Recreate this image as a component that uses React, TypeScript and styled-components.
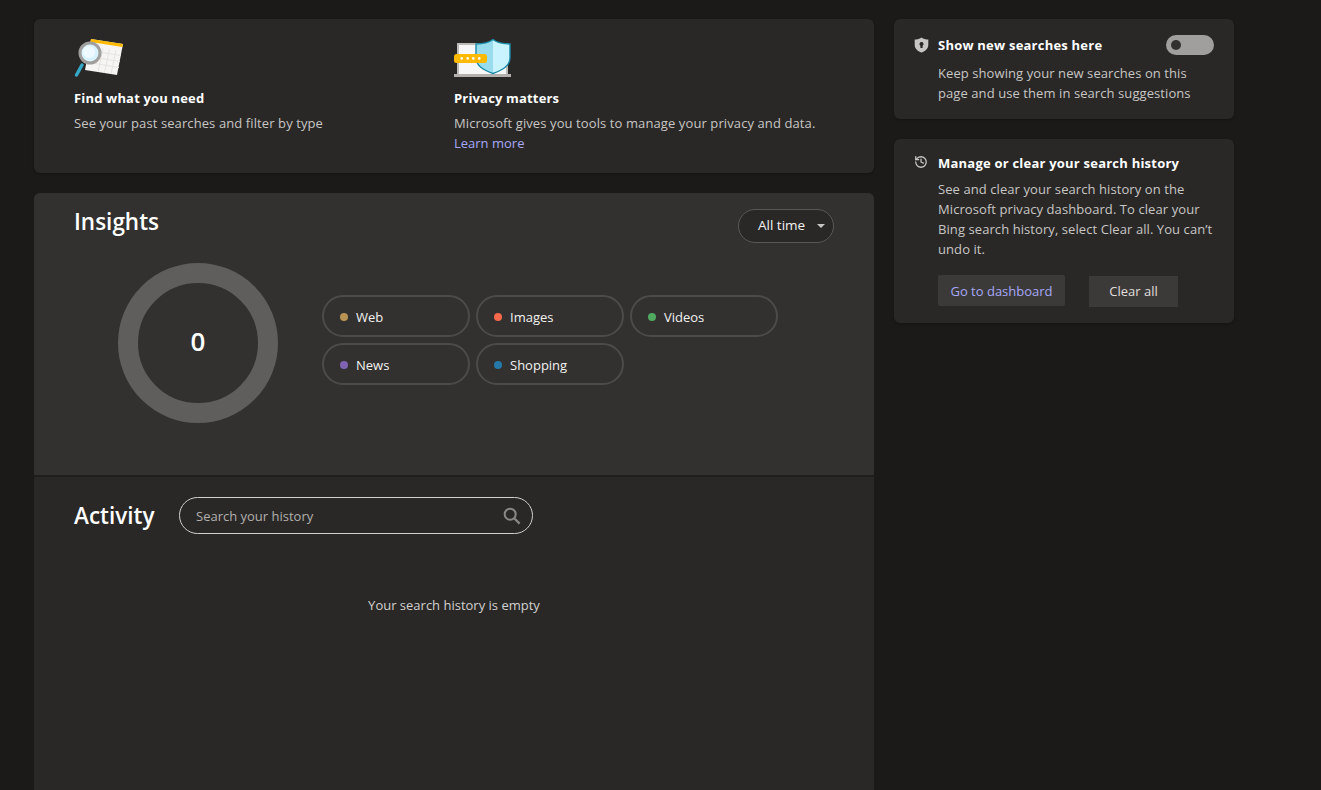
import styled, { createGlobalStyle } from "styled-components";
import { History } from "lucide-react";

const GlobalStyle = createGlobalStyle`
  html, body {
    margin: 0;
    height: 100%;
    overflow: hidden;
    background-color: #1b1a19;
  }
  body, input, button {
    font-family: "Open Sans", "Noto Sans", "Liberation Sans", sans-serif;
  }
`;

const categories = [
  { label: "Web", color: "#b99455" },
  { label: "Images", color: "#f7694a" },
  { label: "Videos", color: "#4fa95f" },
  { label: "News", color: "#8064b4" },
  { label: "Shopping", color: "#2479a8" },
];

const CalendarArt = () => (
  <svg width="50" height="40" viewBox="0 0 50 40">
    <polygon points="17,1 49,6 43,37 11,32" fill="#f6f5f3" />
    <g stroke="#e6e4e1" strokeWidth="1">
      <line x1="25" y1="14" x2="47" y2="17.5" />
      <line x1="24" y1="20" x2="46" y2="23.5" />
      <line x1="18" y1="25" x2="45" y2="29.5" />
      <line x1="29" y1="10" x2="24" y2="34" />
      <line x1="35.5" y1="11" x2="30.5" y2="35" />
      <line x1="42" y1="12" x2="37" y2="36" />
    </g>
    <polygon points="17,1 49,6 48.4,9 16.4,4" fill="#ffb900" />
    <line x1="8" y1="27" x2="2.5" y2="37" stroke="#35a9c6" strokeWidth="3.4" strokeLinecap="round" />
    <circle cx="16" cy="15" r="10" fill="#d8f3fb" stroke="#a19f9d" strokeWidth="3" />
    <circle cx="15" cy="14" r="6" fill="#eefaff" />
  </svg>
);

const PrivacyArt = () => (
  <svg width="58" height="40" viewBox="0 0 58 40">
    <rect x="3" y="5" width="51" height="32" fill="#bdbbb8" />
    <rect x="5" y="7" width="47" height="29" fill="#f7f7f7" />
    <rect x="0" y="36" width="57" height="3" fill="#b3b0ad" />
    <path d="M39 1.5 C43 4.5 47 6 56 6 L56 20 C56 28 48 32 39 35.5 C30 32 22 28 22 20 L22 6 C31 6 35 4.5 39 1.5 Z" fill="#c9f4ff" />
    <path d="M39 1.5 C35 4.5 31 6 22 6 L22 20 C22 28 30 32 39 35.5 Z" fill="#98dcee" />
    <path d="M39 1.5 C43 4.5 47 6 56 6 L56 20 C56 28 48 32 39 35.5 C30 32 22 28 22 20 L22 6 C31 6 35 4.5 39 1.5 Z" fill="none" stroke="#1b8aa8" strokeWidth="1.4" />
    <rect x="0" y="16" width="33" height="9" rx="2.5" fill="#ffb900" />
    <g fill="#fff">
      <circle cx="7.7" cy="20.4" r="1.3" />
      <circle cx="13.7" cy="20.4" r="1.3" />
      <circle cx="19.3" cy="20.4" r="1.3" />
      <circle cx="25.3" cy="20.4" r="1.3" />
    </g>
  </svg>
);

const ShieldIcon = () => (
  <svg width="15" height="16" viewBox="0 0 15 16">
    <path
      fillRule="evenodd"
      d="M7.5 0.5 C9.5 1.9 11.6 2.5 14.3 2.5 L14.3 8 C14.3 11.6 11.5 14 7.5 15.5 C3.5 14 0.7 11.6 0.7 8 L0.7 2.5 C3.4 2.5 5.5 1.9 7.5 0.5 Z M7.5 5 A2 2 0 0 0 6.4 8.7 L6.4 11 L8.6 11 L8.6 8.7 A2 2 0 0 0 7.5 5 Z"
      fill="#c8c6c4"
    />
  </svg>
);

const SearchIcon = () => (
  <svg width="18" height="18" viewBox="0 0 18 18" fill="none" stroke="#8a8886">
    <circle cx="7.2" cy="7.2" r="5.5" strokeWidth="2" />
    <line x1="11.2" y1="11.2" x2="16.6" y2="16.6" strokeWidth="2.2" />
  </svg>
);

const App = () => {
  return (
    <Page>
      <GlobalStyle />
      <MainColumn>
        <IntroCard>
          <IntroItem>
            <ArtSlot>
              <CalendarArt />
            </ArtSlot>
            <IntroTitle>Find what you need</IntroTitle>
            <BodyText>See your past searches and filter by type</BodyText>
          </IntroItem>
          <IntroItem>
            <ArtSlot>
              <PrivacyArt />
            </ArtSlot>
            <IntroTitle>Privacy matters</IntroTitle>
            <BodyText>Microsoft gives you tools to manage your privacy and data.</BodyText>
            <LearnMore href="#">Learn more</LearnMore>
          </IntroItem>
        </IntroCard>

        <DataCard>
          <InsightsSection>
            <InsightsHeader>
              <SectionTitle>Insights</SectionTitle>
              <RangeSelect>
                All time
                <Caret />
              </RangeSelect>
            </InsightsHeader>
            <InsightsBody>
              <Donut>0</Donut>
              <PillGrid>
                {categories.map((c) => (
                  <Pill key={c.label}>
                    <Dot $color={c.color} />
                    {c.label}
                  </Pill>
                ))}
              </PillGrid>
            </InsightsBody>
          </InsightsSection>

          <ActivitySection>
            <ActivityHeader>
              <ActivityTitle>Activity</ActivityTitle>
              <SearchBox>
                <SearchInput placeholder="Search your history" />
                <SearchIcon />
              </SearchBox>
            </ActivityHeader>
            <EmptyText>Your search history is empty</EmptyText>
          </ActivitySection>
        </DataCard>
      </MainColumn>

      <SideColumn>
        <SideCard $height={100} $top={16}>
          <IconSlot>
            <ShieldIcon />
          </IconSlot>
          <SideContent>
            <SideTitleRow>
              <SideTitle>Show new searches here</SideTitle>
              <Toggle>
                <ToggleKnob />
              </Toggle>
            </SideTitleRow>
            <SideText>Keep showing your new searches on this page and use them in search suggestions</SideText>
          </SideContent>
        </SideCard>

        <SideCard $height={184} $top={14}>
          <IconSlot>
            <History size={14} strokeWidth={2.2} color="#c8c6c4" />
          </IconSlot>
          <SideContent>
            <SideTitle>Manage or clear your search history</SideTitle>
            <SideText>
              See and clear your search history on the Microsoft privacy dashboard. To clear your Bing search history,
              select Clear all. You can’t undo it.
            </SideText>
            <ButtonRow>
              <DashboardButton>Go to dashboard</DashboardButton>
              <ClearButton>Clear all</ClearButton>
            </ButtonRow>
          </SideContent>
        </SideCard>
      </SideColumn>
    </Page>
  );
};

const Page = styled.div`
  display: flex;
  align-items: flex-start;
  gap: 20px;
  padding: 19px 0 0 34px;
  height: 771px;
  overflow: hidden;
`;

const MainColumn = styled.div`
  display: flex;
  flex-direction: column;
  gap: 20px;
  width: 840px;
`;

const SideColumn = styled.div`
  display: flex;
  flex-direction: column;
  gap: 20px;
  width: 340px;
`;

const IntroCard = styled.section`
  display: grid;
  grid-template-columns: 380px 1fr;
  height: 154px;
  box-sizing: border-box;
  padding: 19px 40px 0;
  background-color: #292827;
  border-radius: 6px;
  box-shadow: 0 1px 3px rgba(0, 0, 0, 0.25);
`;

const IntroItem = styled.div`
  display: flex;
  flex-direction: column;
  align-items: flex-start;
`;

const ArtSlot = styled.div`
  height: 40px;
  margin-bottom: 10px;
  line-height: 0;
`;

const IntroTitle = styled.h3`
  margin: 0 0 5px;
  font-size: 13px;
  line-height: 20px;
  font-weight: 700;
  letter-spacing: 0.17px;
  color: #fff;
`;

const BodyText = styled.p`
  margin: 0;
  font-size: 13px;
  line-height: 20px;
  letter-spacing: 0.1px;
  color: #c8c6c4;
`;

const LearnMore = styled.a`
  font-size: 13px;
  line-height: 20px;
  color: #a6a8f5;
  text-decoration: none;
`;

const DataCard = styled.section`
  display: flex;
  flex-direction: column;
  height: 620px;
  border-radius: 6px 6px 0 0;
  overflow: hidden;
  background-color: #292827;
`;

const InsightsSection = styled.div`
  height: 284px;
  flex: none;
  box-sizing: border-box;
  padding: 14px 40px 0;
  background-color: #323130;
  border-bottom: 2px solid #1f1e1d;
`;

const InsightsHeader = styled.div`
  display: flex;
  justify-content: space-between;
  align-items: flex-start;
  height: 56px;
`;

const SectionTitle = styled.h2`
  margin: 0;
  font-size: 22.5px;
  line-height: 30px;
  font-weight: 600;
  color: #fff;
`;

const ActivityTitle = styled(SectionTitle)`
  width: 81px;
`;

const RangeSelect = styled.button`
  display: flex;
  align-items: center;
  justify-content: space-between;
  width: 96px;
  height: 34px;
  margin-top: 2px;
  box-sizing: border-box;
  padding: 0 8px 2px 19px;
  background-color: #292827;
  border: 1px solid #5a5856;
  border-radius: 17px;
  font-size: 13.5px;
  color: #f3f2f1;
`;

const Caret = styled.span`
  width: 0;
  height: 0;
  margin-top: 2px;
  border-left: 4px solid transparent;
  border-right: 4px solid transparent;
  border-top: 4px solid #c8c6c4;
`;

const InsightsBody = styled.div`
  display: flex;
  align-items: flex-start;
  padding-left: 44px;
`;

const Donut = styled.div`
  display: flex;
  align-items: center;
  justify-content: center;
  width: 160px;
  height: 160px;
  box-sizing: border-box;
  padding-bottom: 5px;
  border: 20px solid #605e5c;
  border-radius: 50%;
  font-size: 26px;
  font-weight: 600;
  color: #fff;
`;

const PillGrid = styled.div`
  display: grid;
  grid-template-columns: repeat(3, 148px);
  grid-auto-rows: 42px;
  gap: 6px;
  margin: 32px 0 0 44px;
`;

const Pill = styled.div`
  display: flex;
  align-items: center;
  gap: 8px;
  box-sizing: border-box;
  padding: 1px 0 0 16px;
  border: 2px solid #4d4b49;
  border-radius: 21px;
  font-size: 13px;
  color: #f3f2f1;
`;

const Dot = styled.span<{ $color: string }>`
  width: 8px;
  height: 8px;
  border-radius: 50%;
  background-color: ${(p) => p.$color};
`;

const ActivitySection = styled.div`
  flex: 1;
  padding: 20px 40px 0;
`;

const ActivityHeader = styled.div`
  display: flex;
  align-items: center;
  gap: 24px;
`;

const SearchBox = styled.div`
  display: flex;
  align-items: center;
  width: 354px;
  height: 37px;
  box-sizing: border-box;
  padding: 0 11px 0 16px;
  border: 1px solid #d2d0ce;
  border-radius: 19px;
`;

const SearchInput = styled.input`
  flex: 1;
  min-width: 0;
  padding: 0;
  background: none;
  border: none;
  outline: none;
  font-size: 13px;
  color: #c8c6c4;

  &::placeholder {
    color: #b3b0ad;
    opacity: 1;
  }
`;

const EmptyText = styled.p`
  margin: 61px 0 0;
  font-size: 13px;
  line-height: 20px;
  text-align: center;
  color: #d2d0ce;
`;

const SideCard = styled.section<{ $height: number; $top: number }>`
  display: flex;
  height: ${(p) => p.$height}px;
  box-sizing: border-box;
  padding: ${(p) => p.$top}px 20px 0;
  background-color: #292827;
  border-radius: 6px;
  box-shadow: 0 1px 3px rgba(0, 0, 0, 0.25);
`;

const IconSlot = styled.div`
  flex: none;
  width: 24px;
  margin-top: 2px;
  line-height: 0;
`;

const SideContent = styled.div`
  flex: 1;
  min-width: 0;
`;

const SideTitleRow = styled.div`
  display: flex;
  justify-content: space-between;
  align-items: flex-start;
  height: 22px;
`;

const SideTitle = styled.h3`
  margin: 0;
  font-size: 13px;
  line-height: 20px;
  font-weight: 700;
  letter-spacing: 0.22px;
  color: #fff;
`;

const Toggle = styled.div`
  display: flex;
  align-items: center;
  width: 48px;
  height: 20px;
  box-sizing: border-box;
  padding-left: 5px;
  background-color: #a19f9d;
  border-radius: 10px;
`;

const ToggleKnob = styled.span`
  width: 10px;
  height: 10px;
  border-radius: 50%;
  background-color: #323130;
`;

const SideText = styled.p`
  margin: 6px 0 0;
  font-size: 13px;
  line-height: 20px;
  letter-spacing: 0.08px;
  color: #c8c6c4;
`;

const ButtonRow = styled.div`
  display: flex;
  align-items: flex-start;
  gap: 24px;
  margin-top: 16px;
`;

const DashboardButton = styled.button`
  width: 127px;
  height: 31px;
  padding: 0;
  background-color: #3b3a39;
  border: none;
  border-radius: 2px;
  font-size: 13px;
  color: #a6a8f5;
`;

const ClearButton = styled.button`
  width: 89px;
  height: 31px;
  margin-top: 1px;
  padding: 0 0 2px;
  background-color: #3b3a39;
  border: none;
  font-size: 13px;
  color: #e1dfdd;
`;

export default App;
